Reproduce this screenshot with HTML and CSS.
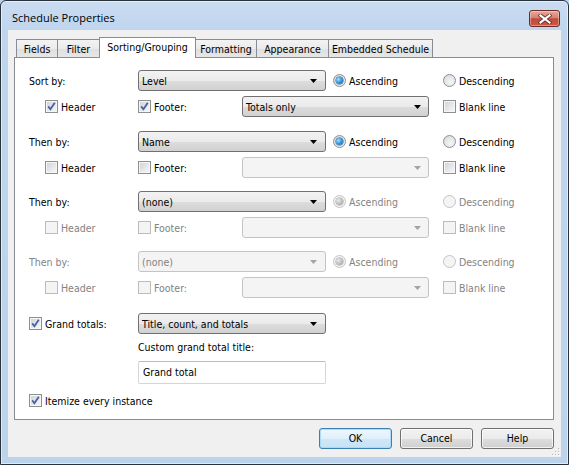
FILE: index.html
```html
<!DOCTYPE html>
<html lang="en">
<head>
<meta charset="utf-8">
<title>Schedule Properties</title>
<link rel="stylesheet" href="styles.css">
</head>
<body>
<div class="window">
  <div class="titlebar">
    <span class="title">Schedule Properties</span>
    <div class="close" aria-label="Close">
      <svg width="14" height="10" viewBox="0 0 14 10">
        <path d="M2.5 1.5 L11.5 8.5 M11.5 1.5 L2.5 8.5" stroke="#4a2424" stroke-width="4" stroke-linecap="square" opacity="0.75"/>
        <path d="M2.5 1.5 L11.5 8.5 M11.5 1.5 L2.5 8.5" stroke="#ffffff" stroke-width="2.2" stroke-linecap="square"/>
      </svg>
    </div>
  </div>
  <div class="client">
    <div class="tabs">
      <div class="tab t-fields">Fields</div>
      <div class="tab t-filter">Filter</div>
      <div class="tab active t-sort">Sorting/Grouping</div>
      <div class="tab t-format">Formatting</div>
      <div class="tab t-appear">Appearance</div>
      <div class="tab t-embed">Embedded Schedule</div>
    </div>
    <div class="panel">
      <div class="group first">
        <div class="row">
          <span class="lbl">Sort by:</span>
          <div class="combo"><span class="val">Level</span><svg class="arr" width="7" height="4" viewBox="0 0 7 4"><path d="M0 0H7L3.5 4Z"/></svg></div>
          <span class="opt asc"><span class="radio on"></span>Ascending</span>
          <span class="opt"><span class="radio"></span>Descending</span>
        </div>
        <div class="row sub">
          <span class="opt hdr"><span class="check on"><svg width="11" height="11" viewBox="0 0 11 11"><path d="M2.2 5.4 L4.4 8.2 L8.8 1.8" fill="none" stroke="#4c5f9e" stroke-width="1.8"/></svg></span>Header</span>
          <span class="opt ftr"><span class="check on"><svg width="11" height="11" viewBox="0 0 11 11"><path d="M2.2 5.4 L4.4 8.2 L8.8 1.8" fill="none" stroke="#4c5f9e" stroke-width="1.8"/></svg></span>Footer:</span>
          <div class="combo fcombo"><span class="val">Totals only</span><svg class="arr" width="7" height="4" viewBox="0 0 7 4"><path d="M0 0H7L3.5 4Z"/></svg></div>
          <span class="opt blank"><span class="check"></span>Blank line</span>
        </div>
      </div>

      <div class="group">
        <div class="row">
          <span class="lbl">Then by:</span>
          <div class="combo"><span class="val">Name</span><svg class="arr" width="7" height="4" viewBox="0 0 7 4"><path d="M0 0H7L3.5 4Z"/></svg></div>
          <span class="opt asc"><span class="radio on"></span>Ascending</span>
          <span class="opt"><span class="radio"></span>Descending</span>
        </div>
        <div class="row sub">
          <span class="opt hdr"><span class="check"></span>Header</span>
          <span class="opt ftr"><span class="check"></span>Footer:</span>
          <div class="combo fcombo off"><span class="val"></span><svg class="arr" width="7" height="4" viewBox="0 0 7 4"><path d="M0 0H7L3.5 4Z"/></svg></div>
          <span class="opt blank"><span class="check"></span>Blank line</span>
        </div>
      </div>

      <div class="group">
        <div class="row">
          <span class="lbl">Then by:</span>
          <div class="combo"><span class="val">(none)</span><svg class="arr" width="7" height="4" viewBox="0 0 7 4"><path d="M0 0H7L3.5 4Z"/></svg></div>
          <span class="opt asc dis"><span class="radio on"></span>Ascending</span>
          <span class="opt dis"><span class="radio"></span>Descending</span>
        </div>
        <div class="row sub">
          <span class="opt hdr dis"><span class="check"></span>Header</span>
          <span class="opt ftr dis"><span class="check"></span>Footer:</span>
          <div class="combo fcombo off"><span class="val"></span><svg class="arr" width="7" height="4" viewBox="0 0 7 4"><path d="M0 0H7L3.5 4Z"/></svg></div>
          <span class="opt blank dis"><span class="check"></span>Blank line</span>
        </div>
      </div>

      <div class="group">
        <div class="row">
          <span class="lbl dis">Then by:</span>
          <div class="combo off"><span class="val">(none)</span><svg class="arr" width="7" height="4" viewBox="0 0 7 4"><path d="M0 0H7L3.5 4Z"/></svg></div>
          <span class="opt asc dis"><span class="radio on"></span>Ascending</span>
          <span class="opt dis"><span class="radio"></span>Descending</span>
        </div>
        <div class="row sub">
          <span class="opt hdr dis"><span class="check"></span>Header</span>
          <span class="opt ftr dis"><span class="check"></span>Footer:</span>
          <div class="combo fcombo off"><span class="val"></span><svg class="arr" width="7" height="4" viewBox="0 0 7 4"><path d="M0 0H7L3.5 4Z"/></svg></div>
          <span class="opt blank dis"><span class="check"></span>Blank line</span>
        </div>
      </div>

      <div class="row grand">
        <span class="opt gt"><span class="check on"><svg width="11" height="11" viewBox="0 0 11 11"><path d="M2.2 5.4 L4.4 8.2 L8.8 1.8" fill="none" stroke="#4c5f9e" stroke-width="1.8"/></svg></span>Grand totals:</span>
        <div class="combo"><span class="val">Title, count, and totals</span><svg class="arr" width="7" height="4" viewBox="0 0 7 4"><path d="M0 0H7L3.5 4Z"/></svg></div>
      </div>
      <div class="caption">Custom grand total title:</div>
      <div class="textbox">Grand total</div>
      <div class="opt itemize"><span class="check on"><svg width="11" height="11" viewBox="0 0 11 11"><path d="M2.2 5.4 L4.4 8.2 L8.8 1.8" fill="none" stroke="#4c5f9e" stroke-width="1.8"/></svg></span>Itemize every instance</div>
    </div>
    <div class="buttons">
      <div class="btn default">OK</div>
      <div class="btn">Cancel</div>
      <div class="btn">Help</div>
    </div>
    <svg class="grip" width="8" height="8" viewBox="0 0 8 8">
      <g fill="#ffffff"><rect x="7" y="1" width="1" height="1"/><rect x="7" y="4" width="1" height="1"/><rect x="4" y="4" width="1" height="1"/><rect x="7" y="7" width="1" height="1"/><rect x="4" y="7" width="1" height="1"/><rect x="1" y="7" width="1" height="1"/></g>
      <g fill="#b4b4b4"><rect x="6" y="0" width="1" height="1"/><rect x="6" y="3" width="1" height="1"/><rect x="3" y="3" width="1" height="1"/><rect x="6" y="6" width="1" height="1"/><rect x="3" y="6" width="1" height="1"/><rect x="0" y="6" width="1" height="1"/></g>
    </svg>
  </div>
</div>
</body>
</html>
```

FILE: styles.css
```css
* { box-sizing: border-box; }
html, body { margin: 0; padding: 0; }
body {
  width: 569px;
  height: 465px;
  overflow: hidden;
  background: #bcd3ec;
  font-family: "DejaVu Sans Condensed", "DejaVu Sans", sans-serif;
  font-size: 10.5px;
  color: #000;
}

.window {
  width: 569px;
  height: 465px;
  border: 1px solid #2a323c;
  border-radius: 6px 6px 0 0;
  background: linear-gradient(#cadcf1 0, #bfd5ee 30px, #bcd3ec 100%);
  box-shadow: inset 0 0 0 1px rgba(255, 255, 255, 0.55);
  padding: 0 7px 7px;
  display: flex;
  flex-direction: column;
}

/* Title bar */
.titlebar {
  height: 29px;
  flex: none;
  display: flex;
  align-items: flex-start;
  justify-content: space-between;
}
.title {
  font-family: "Open Sans", "Noto Sans", sans-serif;
  font-size: 11px;
  line-height: 16px;
  margin: 9px 0 0 4px;
  color: #000;
}
.close {
  width: 31px;
  height: 17px;
  margin: 9px 1px 0 0;
  border: 1px solid #6e2b26;
  border-radius: 3px;
  background: linear-gradient(#e6a89c 0%, #d5826f 45%, #c4493a 52%, #c95a45 100%);
  box-shadow: inset 0 0 0 1px rgba(255, 255, 255, 0.35);
  display: flex;
  align-items: center;
  justify-content: center;
}

/* Client area */
.client {
  flex: 1;
  background: #f0f0f0;
  padding: 7px 7px 0 6px;
  position: relative;
  display: flex;
  flex-direction: column;
}

/* Tabs */
.tabs {
  height: 20px;
  flex: none;
  display: flex;
  align-items: flex-end;
  padding-left: 2px;
}
.tab {
  height: 18px;
  border: 1px solid #898c95;
  border-bottom: none;
  background: linear-gradient(#f3f3f3, #ebebeb 50%, #dfdfdf 51%, #e6e6e6);
  text-align: center;
  line-height: 17px;
  padding-top: 1px;
  white-space: nowrap;
}
.tab + .tab { margin-left: -1px; }
.tab.active {
  height: 21px;
  margin-bottom: -1px;
  background: #fff;
  position: relative;
  z-index: 1;
  line-height: 18px;
  padding-top: 0;
}
.t-fields { width: 42px; }
.t-filter { width: 43px; }
.t-sort { width: 97px; }
.t-format { width: 62px; }
.t-appear { width: 73px; }
.t-embed { width: 105px; }

/* Panel */
.panel {
  width: 540px;
  height: 363px;
  flex: none;
  border: 1px solid #898c95;
  background: #fff;
  padding: 12px 0 0 14px;
  display: flex;
  flex-direction: column;
}
.group {
  display: flex;
  flex-direction: column;
  gap: 5px;
}
.group + .group { margin-top: 13px; }
.group.first { margin-bottom: 1px; }

.row {
  height: 21px;
  display: flex;
  align-items: center;
  white-space: nowrap;
}
.row.sub { padding-left: 16px; }

.lbl { width: 109px; }
.dis, .lbl.dis { color: #838383; }

.opt {
  display: flex;
  align-items: center;
  gap: 3px;
  white-space: nowrap;
}
.asc { width: 110px; margin-left: 7px; }
.hdr { width: 93px; }
.ftr { width: 104px; }
.blank { margin-left: 14px; }
.gt { width: 109px; }

/* Combo boxes */
.combo {
  width: 188px;
  height: 21px;
  border: 1px solid #707070;
  border-radius: 3px;
  background: linear-gradient(#f2f2f2 0%, #ebebeb 50%, #dddddd 51%, #d1d1d1 100%);
  display: flex;
  align-items: center;
  justify-content: space-between;
  padding: 0 8px 0 3px;
  flex: none;
}
.combo .arr { fill: #000; flex: none; }
.combo.fcombo { width: 187px; padding-right: 7px; }
.combo.off {
  border-color: #c2c4c7;
  background: #f4f4f4;
  color: #838383;
}
.combo.off .arr { fill: #a3a3a3; }

/* Checkboxes */
.check {
  width: 13px;
  height: 13px;
  flex: none;
  border: 1px solid #8e8f8f;
  background: linear-gradient(135deg, #cdd1d6 0%, #eceef0 70%, #f6f6f6 100%);
  box-shadow: inset 0 0 0 1px #f6f6f6;
  display: flex;
  align-items: center;
  justify-content: center;
}
.check svg { display: block; }
.dis .check {
  border-color: #bcbcbc;
  background: #f4f4f4;
  box-shadow: none;
}

/* Radio buttons */
.radio {
  width: 13px;
  height: 13px;
  flex: none;
  border-radius: 50%;
  border: 1px solid #8b9097;
  background: radial-gradient(circle at 60% 65%, #f6f6f6 0%, #e2e3e5 60%, #cdd0d4 100%);
  display: flex;
  align-items: center;
  justify-content: center;
}
.radio.on::after {
  content: "";
  width: 7px;
  height: 7px;
  border-radius: 50%;
  background: radial-gradient(circle at 35% 35%, #a7e2ff 0%, #3a9be0 45%, #0d5b9d 100%);
  box-shadow: 0 0 0 0.5px #265a87;
}
.dis .radio {
  border-color: #c2c4c7;
  background: #f4f4f4;
}
.dis .radio.on::after {
  background: radial-gradient(circle at 35% 35%, #ececec 0%, #bdbdbd 55%, #9c9c9c 100%);
  box-shadow: 0 0 0 0.5px #a0a0a0;
}

/* Grand totals area */
.row.grand { margin-top: 15px; }
.caption {
  margin: 6px 0 0 109px;
  height: 14px;
  line-height: 14px;
}
.textbox {
  margin: 7px 0 0 109px;
  width: 188px;
  height: 23px;
  border: 1px solid #d3d5d9;
  border-top-color: #b9bcc1;
  border-radius: 2px;
  padding: 0 4px;
  line-height: 21px;
  background: #fff;
}
.itemize {
  margin-top: 9px;
  height: 15px;
}

/* Buttons */
.buttons {
  display: flex;
  justify-content: flex-end;
  gap: 8px;
  margin-top: 8px;
}
.btn {
  width: 73px;
  height: 21px;
  border: 1px solid #707070;
  border-radius: 3px;
  background: linear-gradient(#f2f2f2 0%, #ebebeb 50%, #dddddd 51%, #cfcfcf 100%);
  box-shadow: inset 0 0 0 1px rgba(255, 255, 255, 0.7);
  text-align: center;
  line-height: 19px;
}
.btn.default {
  border-color: #3c7fb1;
  background: linear-gradient(#eef7fd 0%, #e0f0fa 50%, #cfe8f8 51%, #c5e2f6 100%);
  box-shadow: inset 0 0 0 1px #a9dcf7;
}

.grip {
  position: absolute;
  right: 1px;
  bottom: 1px;
}
```
